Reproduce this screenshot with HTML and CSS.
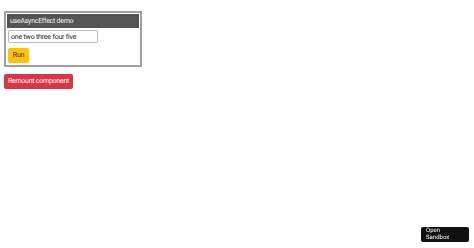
FILE: index.html
```html
<!DOCTYPE html>
<html>
<head>
<meta charset="utf-8">
<link rel="stylesheet" href="styles.css">
</head>
<body>
<div class="page">
  <div class="demo">
    <div class="demo-title">useAsyncEffect demo</div>
    <div class="demo-body">
      <input class="text-input" type="text" value="one two three four five">
      <button class="btn btn-run">Run</button>
    </div>
  </div>
  <button class="btn btn-remount">Remount component</button>
</div>
<a class="sandbox-link">Open<br>Sandbox</a>
</body>
</html>
```

FILE: styles.css
```css
html, body {
  margin: 0;
  padding: 0;
  background: #fff;
  font-family: Roboto, sans-serif;
  text-rendering: geometricPrecision;
}
.page {
  padding: 11px 4px;
  display: flex;
  flex-direction: column;
  align-items: flex-start;
  gap: 7px;
}
.demo {
  width: 132px;
  border: 2px solid #a0a0a0;
  padding: 1px 1px 2px 1px;
  display: flex;
  flex-direction: column;
}
.demo-title {
  height: 14px;
  background: #545454;
  color: #f4f4f4;
  font-size: 7px;
  font-weight: 400;
  line-height: 14px;
  padding-left: 3px;
  white-space: nowrap;
  letter-spacing: -0.25px;
}
.demo-body {
  display: flex;
  flex-direction: column;
  align-items: flex-start;
  padding: 2px 0 0 1px;
  gap: 5px;
}
.text-input {
  box-sizing: border-box;
  width: 90px;
  height: 13px;
  margin: 0;
  padding: 0 2px;
  border: 1px solid #bbb;
  border-radius: 2px;
  font-family: Roboto, sans-serif;
  font-size: 7px;
  font-weight: 400;
  color: #222;
  letter-spacing: -0.2px;
  text-rendering: geometricPrecision;
}
.btn {
  margin: 0;
  border: none;
  border-radius: 2px;
  font-family: Roboto, sans-serif;
  font-size: 7px;
  font-weight: 400;
  height: 15px;
  line-height: 15px;
  white-space: nowrap;
  letter-spacing: -0.25px;
  text-rendering: geometricPrecision;
}
.btn-run {
  background: #ffc107;
  color: #333;
  width: 21px;
  padding: 0;
}
.btn-remount {
  background: #dc3545;
  color: #fff;
  width: 69px;
  padding: 0;
}
.sandbox-link {
  position: fixed;
  right: 5px;
  bottom: 6px;
  width: 48px;
  height: 15px;
  box-sizing: border-box;
  background: #111;
  border-radius: 2px;
  color: #fff;
  font-size: 6px;
  line-height: 6.5px;
  padding: 1px 0 0 5px;
}
```
